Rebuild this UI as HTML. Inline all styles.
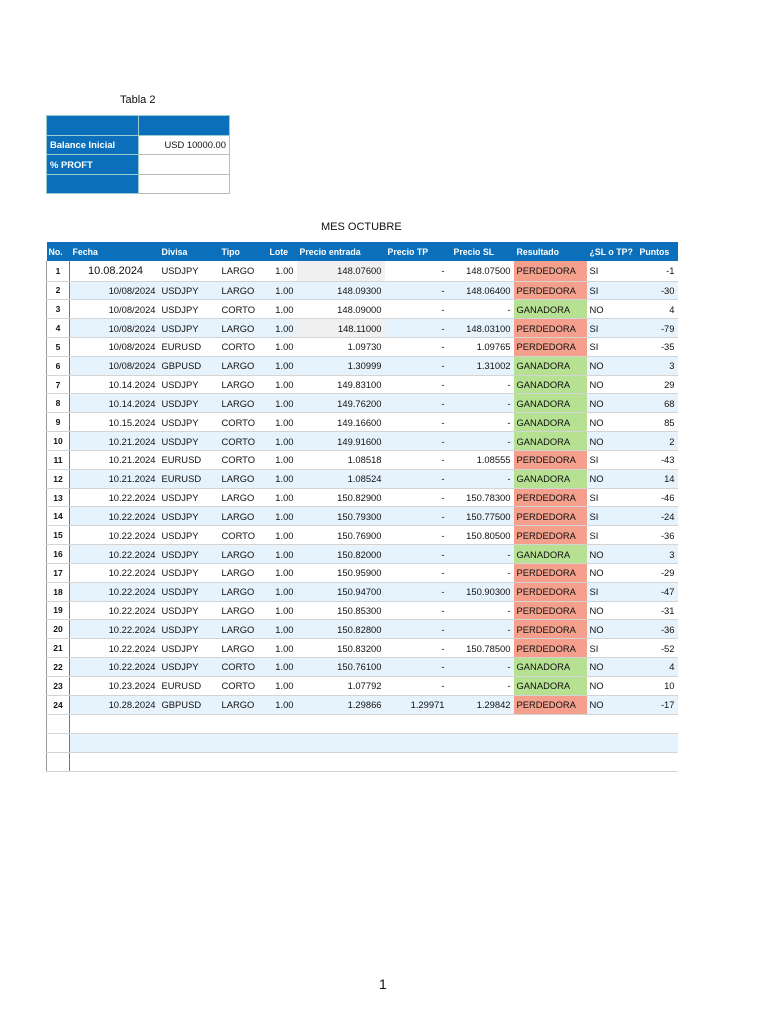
<!DOCTYPE html>
<html><head><meta charset="utf-8"><style>
*{margin:0;padding:0;box-sizing:border-box}
body{width:768px;height:1024px;background:#fff;font-family:"Liberation Sans",Arial,sans-serif;color:#111;position:relative;overflow:hidden}
.abs{position:absolute}
table{border-collapse:collapse;table-layout:fixed;position:absolute;font-size:9.4px}
#t2{left:46px;top:115px;width:183px}
#t2 td{height:19.5px;border:1px solid #bbb;padding:0 3px}
#t2 td.b{background:#0b6fbb;color:#fff;font-weight:bold;border-color:#9cc}
#m{left:46px;top:242px;width:631px}
#m th{background:#0b6fbb;color:#fff;font-weight:bold;height:19px;text-align:left;padding:0 3px;font-size:8.8px}
#m td{height:18.83px;border-bottom:1px solid #d4d4d4;padding:0 3px;white-space:nowrap;overflow:hidden}
#m tr.e td{background:#e6f2fc}
#m td.n{font-weight:bold;border-left:1px solid #999;border-right:1px solid #777;text-align:center;font-size:8.5px}
#m tr.e td.n{background:#fff}
.r{text-align:right}
#m td.P{background:#f4a08c!important}
#m td.G{background:#b6e193!important}
#m tr.f td{height:20px}
#m tr.x td{height:19px}
.gr{background:#f0f0f0!important}
</style></head><body>
<div class="abs" style="left:120px;top:94px;font-size:11px">Tabla 2</div>
<table id="t2"><colgroup><col style="width:92px"><col style="width:91px"></colgroup>
<tr><td class="b"></td><td class="b"></td></tr>
<tr><td class="b">Balance Inicial</td><td class="r">USD 10000.00</td></tr>
<tr><td class="b">% PROFT</td><td></td></tr>
<tr><td class="b"></td><td></td></tr>
</table>
<div class="abs" style="left:321px;top:221px;font-size:11px">MES OCTUBRE</div>
<table id="m">
<colgroup><col style="width:23px"><col style="width:89px"><col style="width:60px"><col style="width:48px"><col style="width:30px"><col style="width:88px"><col style="width:63px"><col style="width:66px"><col style="width:73px"><col style="width:50px"><col style="width:41px"></colgroup>
<tr><th style="padding-left:2px">No.</th><th>Fecha</th><th>Divisa</th><th>Tipo</th><th class="r">Lote</th><th>Precio entrada</th><th>Precio TP</th><th style="padding-left:6px">Precio SL</th><th>Resultado</th><th>¿SL o TP?</th><th>Puntos</th></tr>
<tr class="f"><td class="n">1</td><td style="font-size:11px;padding-left:18px">10.08.2024</td><td>USDJPY</td><td>LARGO</td><td class="r">1.00</td><td class="r gr">148.07600</td><td class="r">-</td><td class="r">148.07500</td><td class="P">PERDEDORA</td><td>SI</td><td class="r">-1</td></tr>
<tr class="e"><td class="n">2</td><td class="r">10/08/2024</td><td>USDJPY</td><td>LARGO</td><td class="r">1.00</td><td class="r">148.09300</td><td class="r">-</td><td class="r">148.06400</td><td class="P">PERDEDORA</td><td>SI</td><td class="r">-30</td></tr>
<tr><td class="n">3</td><td class="r">10/08/2024</td><td>USDJPY</td><td>CORTO</td><td class="r">1.00</td><td class="r">148.09000</td><td class="r">-</td><td class="r">-</td><td class="G">GANADORA</td><td>NO</td><td class="r">4</td></tr>
<tr class="e"><td class="n">4</td><td class="r">10/08/2024</td><td>USDJPY</td><td>LARGO</td><td class="r">1.00</td><td class="r gr">148.11000</td><td class="r">-</td><td class="r">148.03100</td><td class="P">PERDEDORA</td><td>SI</td><td class="r">-79</td></tr>
<tr><td class="n">5</td><td class="r">10/08/2024</td><td>EURUSD</td><td>CORTO</td><td class="r">1.00</td><td class="r">1.09730</td><td class="r">-</td><td class="r">1.09765</td><td class="P">PERDEDORA</td><td>SI</td><td class="r">-35</td></tr>
<tr class="e"><td class="n">6</td><td class="r">10/08/2024</td><td>GBPUSD</td><td>LARGO</td><td class="r">1.00</td><td class="r">1.30999</td><td class="r">-</td><td class="r">1.31002</td><td class="G">GANADORA</td><td>NO</td><td class="r">3</td></tr>
<tr><td class="n">7</td><td class="r">10.14.2024</td><td>USDJPY</td><td>LARGO</td><td class="r">1.00</td><td class="r">149.83100</td><td class="r">-</td><td class="r">-</td><td class="G">GANADORA</td><td>NO</td><td class="r">29</td></tr>
<tr class="e"><td class="n">8</td><td class="r">10.14.2024</td><td>USDJPY</td><td>LARGO</td><td class="r">1.00</td><td class="r">149.76200</td><td class="r">-</td><td class="r">-</td><td class="G">GANADORA</td><td>NO</td><td class="r">68</td></tr>
<tr><td class="n">9</td><td class="r">10.15.2024</td><td>USDJPY</td><td>CORTO</td><td class="r">1.00</td><td class="r">149.16600</td><td class="r">-</td><td class="r">-</td><td class="G">GANADORA</td><td>NO</td><td class="r">85</td></tr>
<tr class="e"><td class="n">10</td><td class="r">10.21.2024</td><td>USDJPY</td><td>CORTO</td><td class="r">1.00</td><td class="r">149.91600</td><td class="r">-</td><td class="r">-</td><td class="G">GANADORA</td><td>NO</td><td class="r">2</td></tr>
<tr><td class="n">11</td><td class="r">10.21.2024</td><td>EURUSD</td><td>CORTO</td><td class="r">1.00</td><td class="r">1.08518</td><td class="r">-</td><td class="r">1.08555</td><td class="P">PERDEDORA</td><td>SI</td><td class="r">-43</td></tr>
<tr class="e"><td class="n">12</td><td class="r">10.21.2024</td><td>EURUSD</td><td>LARGO</td><td class="r">1.00</td><td class="r">1.08524</td><td class="r">-</td><td class="r">-</td><td class="G">GANADORA</td><td>NO</td><td class="r">14</td></tr>
<tr><td class="n">13</td><td class="r">10.22.2024</td><td>USDJPY</td><td>LARGO</td><td class="r">1.00</td><td class="r">150.82900</td><td class="r">-</td><td class="r">150.78300</td><td class="P">PERDEDORA</td><td>SI</td><td class="r">-46</td></tr>
<tr class="e"><td class="n">14</td><td class="r">10.22.2024</td><td>USDJPY</td><td>LARGO</td><td class="r">1.00</td><td class="r">150.79300</td><td class="r">-</td><td class="r">150.77500</td><td class="P">PERDEDORA</td><td>SI</td><td class="r">-24</td></tr>
<tr><td class="n">15</td><td class="r">10.22.2024</td><td>USDJPY</td><td>CORTO</td><td class="r">1.00</td><td class="r">150.76900</td><td class="r">-</td><td class="r">150.80500</td><td class="P">PERDEDORA</td><td>SI</td><td class="r">-36</td></tr>
<tr class="e"><td class="n">16</td><td class="r">10.22.2024</td><td>USDJPY</td><td>LARGO</td><td class="r">1.00</td><td class="r">150.82000</td><td class="r">-</td><td class="r">-</td><td class="G">GANADORA</td><td>NO</td><td class="r">3</td></tr>
<tr><td class="n">17</td><td class="r">10.22.2024</td><td>USDJPY</td><td>LARGO</td><td class="r">1.00</td><td class="r">150.95900</td><td class="r">-</td><td class="r">-</td><td class="P">PERDEDORA</td><td>NO</td><td class="r">-29</td></tr>
<tr class="e"><td class="n">18</td><td class="r">10.22.2024</td><td>USDJPY</td><td>LARGO</td><td class="r">1.00</td><td class="r">150.94700</td><td class="r">-</td><td class="r">150.90300</td><td class="P">PERDEDORA</td><td>SI</td><td class="r">-47</td></tr>
<tr><td class="n">19</td><td class="r">10.22.2024</td><td>USDJPY</td><td>LARGO</td><td class="r">1.00</td><td class="r">150.85300</td><td class="r">-</td><td class="r">-</td><td class="P">PERDEDORA</td><td>NO</td><td class="r">-31</td></tr>
<tr class="e"><td class="n">20</td><td class="r">10.22.2024</td><td>USDJPY</td><td>LARGO</td><td class="r">1.00</td><td class="r">150.82800</td><td class="r">-</td><td class="r">-</td><td class="P">PERDEDORA</td><td>NO</td><td class="r">-36</td></tr>
<tr><td class="n">21</td><td class="r">10.22.2024</td><td>USDJPY</td><td>LARGO</td><td class="r">1.00</td><td class="r">150.83200</td><td class="r">-</td><td class="r">150.78500</td><td class="P">PERDEDORA</td><td>SI</td><td class="r">-52</td></tr>
<tr class="e"><td class="n">22</td><td class="r">10.22.2024</td><td>USDJPY</td><td>CORTO</td><td class="r">1.00</td><td class="r">150.76100</td><td class="r">-</td><td class="r">-</td><td class="G">GANADORA</td><td>NO</td><td class="r">4</td></tr>
<tr><td class="n">23</td><td class="r">10.23.2024</td><td>EURUSD</td><td>CORTO</td><td class="r">1.00</td><td class="r">1.07792</td><td class="r">-</td><td class="r">-</td><td class="G">GANADORA</td><td>NO</td><td class="r">10</td></tr>
<tr class="e"><td class="n">24</td><td class="r">10.28.2024</td><td>GBPUSD</td><td>LARGO</td><td class="r">1.00</td><td class="r">1.29866</td><td class="r">1.29971</td><td class="r">1.29842</td><td class="P">PERDEDORA</td><td>NO</td><td class="r">-17</td></tr>
<tr class="x"><td class="n"></td><td></td><td></td><td></td><td></td><td></td><td></td><td></td><td></td><td></td><td></td></tr>
<tr class="x e"><td class="n"></td><td></td><td></td><td></td><td></td><td></td><td></td><td></td><td></td><td></td><td></td></tr>
<tr class="x"><td class="n"></td><td></td><td></td><td></td><td></td><td></td><td></td><td></td><td></td><td></td><td></td></tr>
</table>
<div class="abs" style="left:379px;top:976px;font-size:14px">1</div>
</body></html>
